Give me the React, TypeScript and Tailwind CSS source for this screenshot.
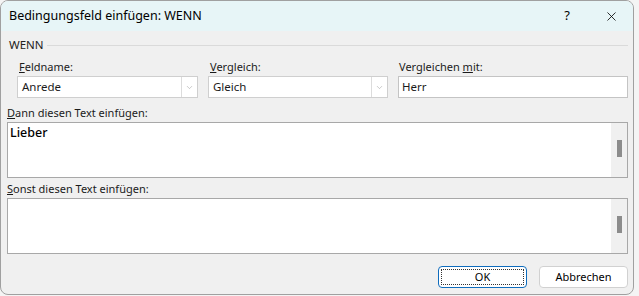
import { X, ChevronDown } from 'lucide-react';

function Combo({ value }: { value: string }) {
  return (
    <div className="flex h-[22px] border border-[#cfcfcf] bg-white">
      <span className="flex-1 pl-[4px] text-[11.5px] leading-[20px]">{value}</span>
      <span className="flex w-[16px] items-center justify-center border-l border-[#dcdcdc]">
        <ChevronDown className="h-[9px] w-[9px] text-[#8a8a8a]" strokeWidth={1.2} />
      </span>
    </div>
  );
}

function TextBox({ value, top }: { value?: string; top: number }) {
  return (
    <div className="flex h-[56px] border border-[#a8a8a8] bg-white">
      <div className="flex-1 pl-[2px] pt-[2px] text-[12.5px] font-medium leading-[16px] text-black">{value}</div>
      <div className="w-[16px] bg-[#f0f0f0]">
        <div className="mx-auto w-[5px] h-[17px] bg-[#8c8c8c]" style={{ marginTop: top }} />
      </div>
    </div>
  );
}

export default function App() {
  return (
    <div className="w-[639px] h-[296px] bg-[#f4f4f4] overflow-hidden" style={{ fontFamily: '"Noto Sans", "Segoe UI", sans-serif' }}>
      <div className="w-[634px] h-[295px] rounded-lg border border-[#a0a0a0] bg-[#f0f0f0] overflow-hidden text-[11px] text-[#1b1b1b]">
        {/* title bar */}
        <div className="flex h-[30px] items-center bg-[#e7f5f7] pl-[8px] pr-[14px]">
          <span className="flex-1 text-[12.5px] text-black">Bedingungsfeld einfügen: WENN</span>
          <span className="mr-[34px] text-[13px] text-black">?</span>
          <X className="h-[15px] w-[15px] text-black" strokeWidth={1.3} />
        </div>

        <div className="pt-[6px] pl-[6px] pr-[5px]">
          {/* group header */}
          <div className="flex h-[16px] items-center pl-[2px]">
            <span className="mr-[3px] text-[11.5px] text-[#222]">WENN</span>
            <div className="flex-1 border-t border-[#dadada]" />
          </div>

          {/* fields row */}
          <div className="mt-[6px] ml-[10px] grid grid-cols-[181px_180px_1fr] gap-x-[10px]">
            <div>
              <div className="pl-[2px] leading-[15px]"><u>F</u>eldname:</div>
              <div className="mt-[2px]"><Combo value="Anrede" /></div>
            </div>
            <div>
              <div className="pl-[2px] leading-[15px]"><u>V</u>ergleich:</div>
              <div className="mt-[2px]"><Combo value="Gleich" /></div>
            </div>
            <div>
              <div className="pl-[1px] leading-[15px]">Vergleichen <u>m</u>it:</div>
              <div className="mt-[2px] h-[22px] border border-[#c4c4c4] bg-white pl-[3px] text-[11.5px] leading-[20px]">Herr</div>
            </div>
          </div>

          {/* then */}
          <div className="mt-[7px] leading-[16px]"><u>D</u>ann diesen Text einfügen:</div>
          <div className="mt-[1px]"><TextBox value="Lieber" top={17} /></div>

          {/* else */}
          <div className="mt-[3px] leading-[16px]"><u>S</u>onst diesen Text einfügen:</div>
          <div className="mt-[1px]"><TextBox top={17} /></div>

          {/* buttons */}
          <div className="mt-[12px] flex justify-end gap-[12px]">
            <button className="h-[22px] w-[89px] rounded-[4px] border border-[#0f6cbd] bg-white p-[2px]">
              <span className="flex h-full w-full items-center justify-center border border-dotted border-[#333] text-black">OK</span>
            </button>
            <button className="h-[22px] w-[89px] rounded-[4px] border border-[#d1d1d1] bg-white text-black">Abbrechen</button>
          </div>
        </div>
      </div>
    </div>
  );
}
